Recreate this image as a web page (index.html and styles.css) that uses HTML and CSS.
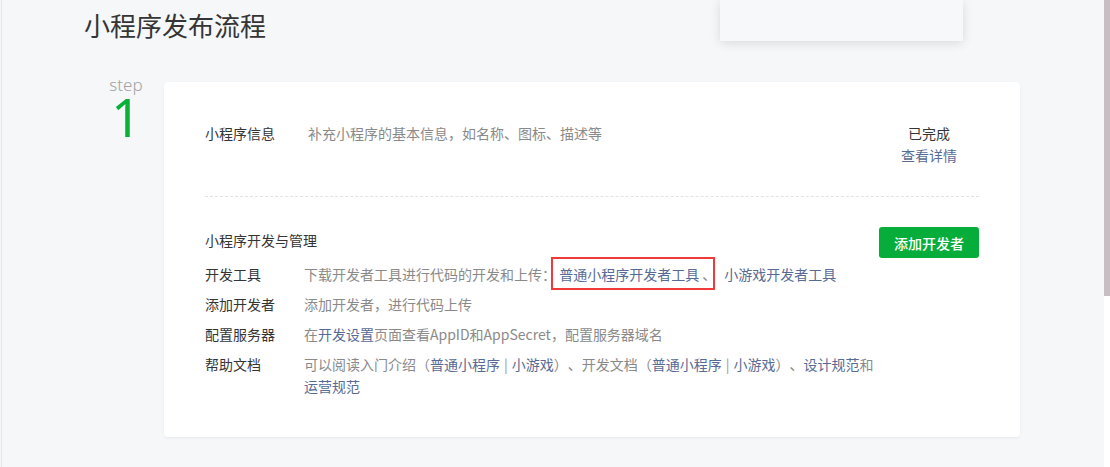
FILE: index.html
```html
<!DOCTYPE html>
<html lang="zh-CN">
<head>
<meta charset="utf-8">
<title>小程序发布流程</title>
<link rel="stylesheet" href="styles.css">
</head>
<body>
<div class="page">
  <div class="popup"></div>
  <div class="scrollbar"><div class="thumb"></div></div>

  <h1 class="title">小程序发布流程</h1>

  <div class="step">
    <div class="step-index">
      <div class="step-word">step</div>
      <div class="step-num">1</div>
    </div>

    <div class="card">
      <div class="sec-info">
        <div class="info-label">小程序信息</div>
        <div class="info-desc">补充小程序的基本信息，如名称、图标、描述等</div>
        <div class="info-side">
          <div class="done">已完成</div>
          <a class="link" href="#">查看详情</a>
        </div>
      </div>

      <div class="sec-dev">
        <div class="dev-head">
          <div class="dev-title">小程序开发与管理</div>
          <button class="btn-primary" type="button">添加开发者</button>
        </div>
        <ul class="dev-list">
          <li class="dev-row">
            <span class="dev-label">开发工具</span>
            <span class="dev-desc">下载开发者工具进行代码的开发和上传： <span class="mark"><a class="link" href="#">普通小程序开发者工具</a><span class="mark-sep">、</span></span><a class="link" href="#">小游戏开发者工具</a></span>
          </li>
          <li class="dev-row">
            <span class="dev-label">添加开发者</span>
            <span class="dev-desc">添加开发者，进行代码上传</span>
          </li>
          <li class="dev-row">
            <span class="dev-label">配置服务器</span>
            <span class="dev-desc">在<a class="link" href="#">开发设置</a>页面查看AppID和AppSecret，配置服务器域名</span>
          </li>
          <li class="dev-row">
            <span class="dev-label">帮助文档</span>
            <span class="dev-desc">可以阅读入门介绍（<a class="link" href="#">普通小程序</a><span class="sep">|</span><a class="link" href="#">小游戏</a>）、开发文档（<a class="link" href="#">普通小程序</a><span class="sep">|</span><a class="link" href="#">小游戏</a>）、<a class="link" href="#">设计规范</a>和<a class="link" href="#">运营规范</a></span>
          </li>
        </ul>
      </div>
    </div>
  </div>
</div>
</body>
</html>
```

FILE: styles.css
```css
html, body {
  margin: 0;
  padding: 0;
}

body {
  background: #f6f7f9;
  font-family: "Noto Sans CJK SC", "Noto Sans", sans-serif;
  font-size: 14px;
  color: #353535;
  overflow: hidden;
  text-spacing-trim: space-all;
}

.page {
  position: relative;
  height: 467px;
  box-sizing: border-box;
  margin-left: 1px;
  border-left: 1px solid #e6e4ec;
  padding: 0 90px 0 82px;
}

.popup {
  position: absolute;
  left: 718px;
  top: 0;
  width: 243px;
  height: 41px;
  background: #f7f8fa;
  box-shadow: 0 2px 10px rgba(0, 0, 0, 0.12);
}

.scrollbar {
  position: fixed;
  top: 0;
  right: 0;
  width: 6px;
  height: 100%;
  background: #ffffff;
}

.scrollbar .thumb {
  height: 296px;
  background: #c6bec2;
}

.title {
  margin: 0;
  padding-top: 7px;
  font-size: 26px;
  line-height: 36px;
  font-weight: normal;
  color: #353535;
}

.step {
  display: flex;
  align-items: flex-start;
  margin-top: 39px;
}

.step-index {
  width: 84px;
  flex: none;
  text-align: center;
  margin-top: -6px;
}

.step-word {
  font-family: "Noto Sans", "Open Sans", sans-serif;
  font-size: 17px;
  line-height: 18px;
  font-weight: 300;
  color: #a3a3a3;
}

.step-num {
  font-family: "Noto Sans", "Open Sans", sans-serif;
  font-size: 52px;
  line-height: 46px;
  font-weight: normal;
  color: #09b03b;
}

.card {
  flex: 1;
  margin-left: -4px;
  background: #ffffff;
  border-radius: 4px;
  box-shadow: 0 1px 3px rgba(0, 0, 0, 0.06);
  padding: 40px 41px;
}

.sec-info {
  display: flex;
  align-items: flex-start;
  line-height: 22px;
  padding-bottom: 30px;
  border-bottom: 1px dashed #e3e3e3;
}

.info-label {
  width: 103px;
  flex: none;
}

.info-desc {
  flex: 1;
  color: #8a8a8a;
}

.info-side {
  width: 100px;
  flex: none;
  text-align: center;
}

.link {
  color: #576b95;
  text-decoration: none;
}

.sec-dev {
  padding-top: 30px;
}

.dev-head {
  display: flex;
  justify-content: space-between;
  align-items: flex-start;
}

.dev-title {
  padding-top: 2px;
  line-height: 22px;
}

.btn-primary {
  width: 100px;
  height: 31px;
  border: 0;
  border-radius: 3px;
  background: #07ad3a;
  color: #ffffff;
  font-family: inherit;
  font-size: 14px;
  font-weight: 500;
  padding: 0;
  cursor: pointer;
}

.dev-list {
  list-style: none;
  margin: 5px 0 0;
  padding: 0 100px 0 0;
}

.dev-row {
  display: flex;
  align-items: flex-start;
  line-height: 22px;
  margin-bottom: 8px;
}

.dev-row:last-child {
  margin-bottom: 0;
}

.dev-label {
  width: 99px;
  flex: none;
}

.dev-desc {
  flex: 1;
  color: #8a8a8a;
}

.sep {
  color: #999999;
  margin: 0 4px;
}

.mark {
  position: relative;
  display: inline-block;
  line-height: 22px;
  vertical-align: top;
  margin-right: 8px;
}

.mark-sep {
  margin-left: 3px;
}

.mark::after {
  content: "";
  position: absolute;
  left: -8px;
  right: 1px;
  top: -6px;
  bottom: -5px;
  border: 2px solid #f03a3a;
}
```
